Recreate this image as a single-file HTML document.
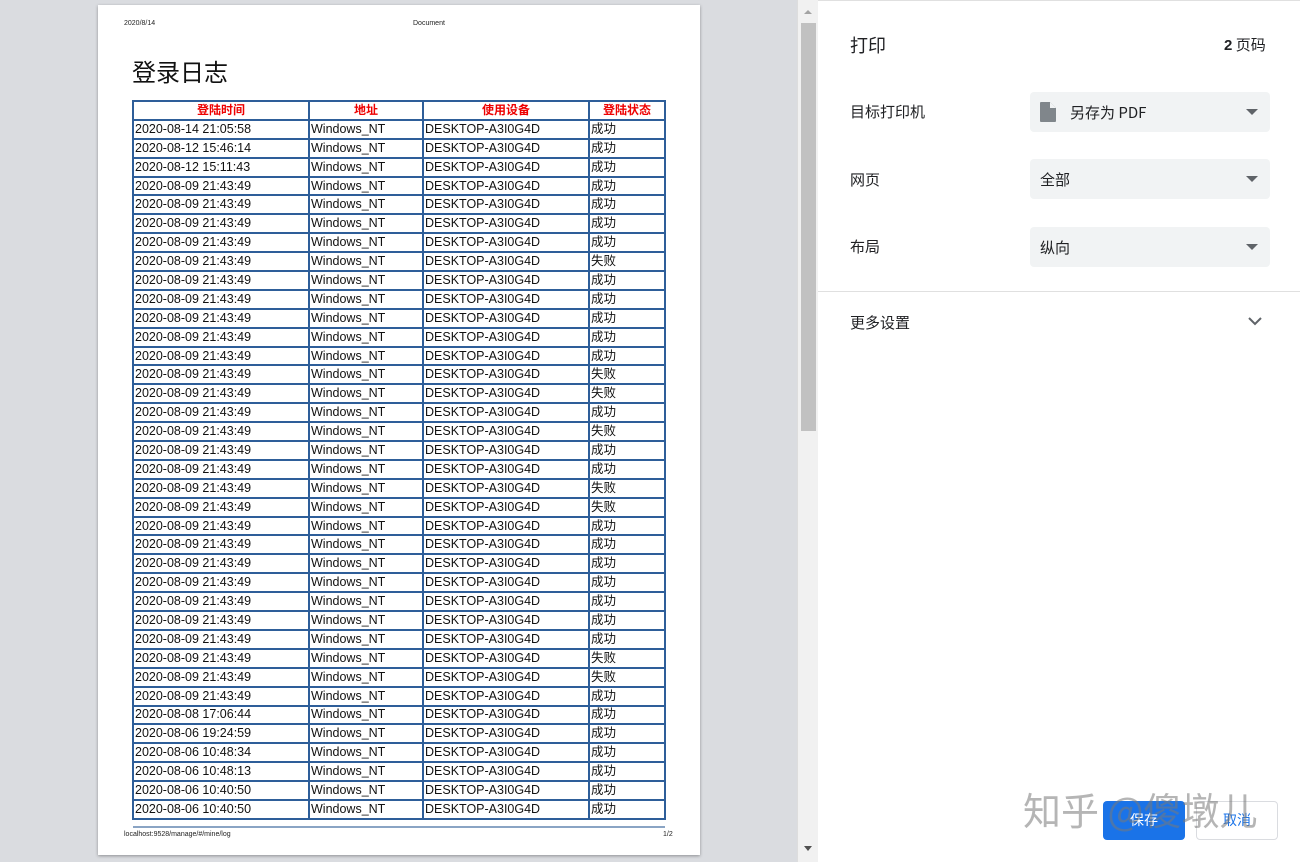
<!DOCTYPE html>
<html><head><meta charset="utf-8"><style>
*{margin:0;padding:0;box-sizing:border-box}
body{width:1300px;height:862px;overflow:hidden;background:#fff;font-family:"Liberation Sans","Noto Sans CJK SC",sans-serif;position:relative}
#left{position:absolute;left:0;top:0;width:797px;height:862px;background:#dadce0}
#page{position:absolute;left:98px;top:5px;width:602px;height:850px;background:#fff;box-shadow:0 1px 3px rgba(0,0,0,.35)}
.sm{position:absolute;font-size:7px;color:#222}
h1{position:absolute;left:34px;top:48px;font-size:24px;font-weight:normal;color:#111;font-family:"Noto Sans CJK SC",sans-serif}
table{position:absolute;left:34px;top:95px;border-collapse:collapse;width:532px;table-layout:fixed}
td,th{border:2px solid #2e5e99;height:18.9px;padding:0 1px;font-size:12.5px;color:#111;line-height:15px;white-space:nowrap;overflow:hidden;font-family:"Liberation Sans","Noto Sans CJK SC",sans-serif;font-weight:normal;text-align:left}
th{color:#e00;font-weight:bold;text-align:center;font-size:12px}
#hr{position:absolute;left:35px;top:821px;width:532px;height:2px;background:#8aa4c4}
#sb{position:absolute;left:797px;top:0;width:21px;height:862px;background:#f1f1f1;border-left:1px solid #ddd}
#thumb{position:absolute;left:3px;top:23px;width:15px;height:408px;background:#c1c1c1}
#right{position:absolute;left:818px;top:0;width:482px;height:862px;background:#fff;border-top:1px solid #e0e0e0}
.t{position:absolute;font-size:15px;color:#202124;font-family:"Noto Sans CJK SC",sans-serif}
.sel{position:absolute;left:212px;width:240px;height:40px;background:#f1f3f4;border-radius:4px}
.sel span{position:absolute;top:10px;font-size:15px;color:#202124;font-family:"Noto Sans CJK SC",sans-serif}
.tri{position:absolute;right:12px;top:17px;width:0;height:0;border-left:6px solid transparent;border-right:6px solid transparent;border-top:6px solid #5f6368}
</style></head><body>
<div id="left">
<div id="page">
<div class="sm" style="left:26px;top:15px">2020/8/14</div>
<div class="sm" style="left:315px;top:15px">Document</div>
<h1>登录日志</h1>
<table>
<colgroup><col style="width:176px"><col style="width:114px"><col style="width:166px"><col style="width:76px"></colgroup>
<tr><th>登陆时间</th><th>地址</th><th>使用设备</th><th>登陆状态</th></tr>
<tbody id="tb"></tbody>
</table>
<div id="hr"></div>
<div class="sm" style="left:26px;top:826px">localhost:9528/manage/#/mine/log</div>
<div class="sm" style="left:565px;top:826px">1/2</div>
</div>
</div>
<div id="sb"><div style="position:absolute;left:6px;top:10px;border-left:4px solid transparent;border-right:4px solid transparent;border-bottom:4px solid #a3a3a3"></div><div id="thumb"></div><div style="position:absolute;left:6px;top:846px;border-left:4px solid transparent;border-right:4px solid transparent;border-top:5px solid #505050"></div></div>
<div id="right">
<div class="t" style="left:32px;top:31px;font-size:18px">打印</div>
<div class="t" style="left:406px;top:33px"><b style="font-family:'Liberation Sans'">2</b> 页码</div>
<div class="t" style="left:32px;top:100px">目标打印机</div>
<div class="sel" style="top:91px"><svg style="position:absolute;left:10px;top:10px" width="16" height="20" viewBox="0 0 16 20"><path d="M1 0h9l6 6v13a1 1 0 0 1-1 1H1a1 1 0 0 1-1-1V1a1 1 0 0 1 1-1z" fill="#80868b"/><path d="M10 0v6h6z" fill="#f1f3f4"/></svg><span style="left:40px">另存为 PDF</span><div class="tri"></div></div>
<div class="t" style="left:32px;top:168px">网页</div>
<div class="sel" style="top:158px"><span style="left:10px">全部</span><div class="tri"></div></div>
<div class="t" style="left:32px;top:235px">布局</div>
<div class="sel" style="top:226px"><span style="left:10px">纵向</span><div class="tri"></div></div>
<div style="position:absolute;left:0;top:290px;width:482px;height:1px;background:#e0e0e0"></div>
<div class="t" style="left:32px;top:311px">更多设置</div>
<svg style="position:absolute;left:430px;top:316px" width="14" height="9"><path d="M1 1l6 6 6-6" stroke="#5f6368" stroke-width="2" fill="none"/></svg>
<div style="position:absolute;left:285px;top:800px;width:82px;height:39px;background:#1a73e8;border-radius:4px;color:#fff;font-size:14px;text-align:center;line-height:39px;font-family:'Noto Sans CJK SC',sans-serif">保存</div>
<div style="position:absolute;left:378px;top:800px;width:82px;height:39px;border:1px solid #dadce0;border-radius:4px;color:#1a73e8;font-size:14px;text-align:center;line-height:37px;font-family:'Noto Sans CJK SC',sans-serif">取消</div>
<div style="position:absolute;left:205px;top:780px;font-size:38px;color:rgba(120,120,120,.55);font-family:'Noto Sans CJK SC',sans-serif;white-space:nowrap">知乎 @傻墩儿</div>
</div>
<script>
var d=["2020-08-14 21:05:58","2020-08-12 15:46:14","2020-08-12 15:11:43"];
for(var i=0;i<28;i++)d.push("2020-08-09 21:43:49");
d=d.concat(["2020-08-08 17:06:44","2020-08-06 19:24:59","2020-08-06 10:48:34","2020-08-06 10:48:13","2020-08-06 10:40:50","2020-08-06 10:40:50"]);
var f=[8,14,15,17,20,21,29,30];
var h="";
for(var i=0;i<d.length;i++){h+="<tr><td>"+d[i]+"</td><td>Windows_NT</td><td>DESKTOP-A3I0G4D</td><td>"+(f.indexOf(i+1)>=0?"失败":"成功")+"</td></tr>";}
document.getElementById("tb").innerHTML=h;
</script>
</body></html>
